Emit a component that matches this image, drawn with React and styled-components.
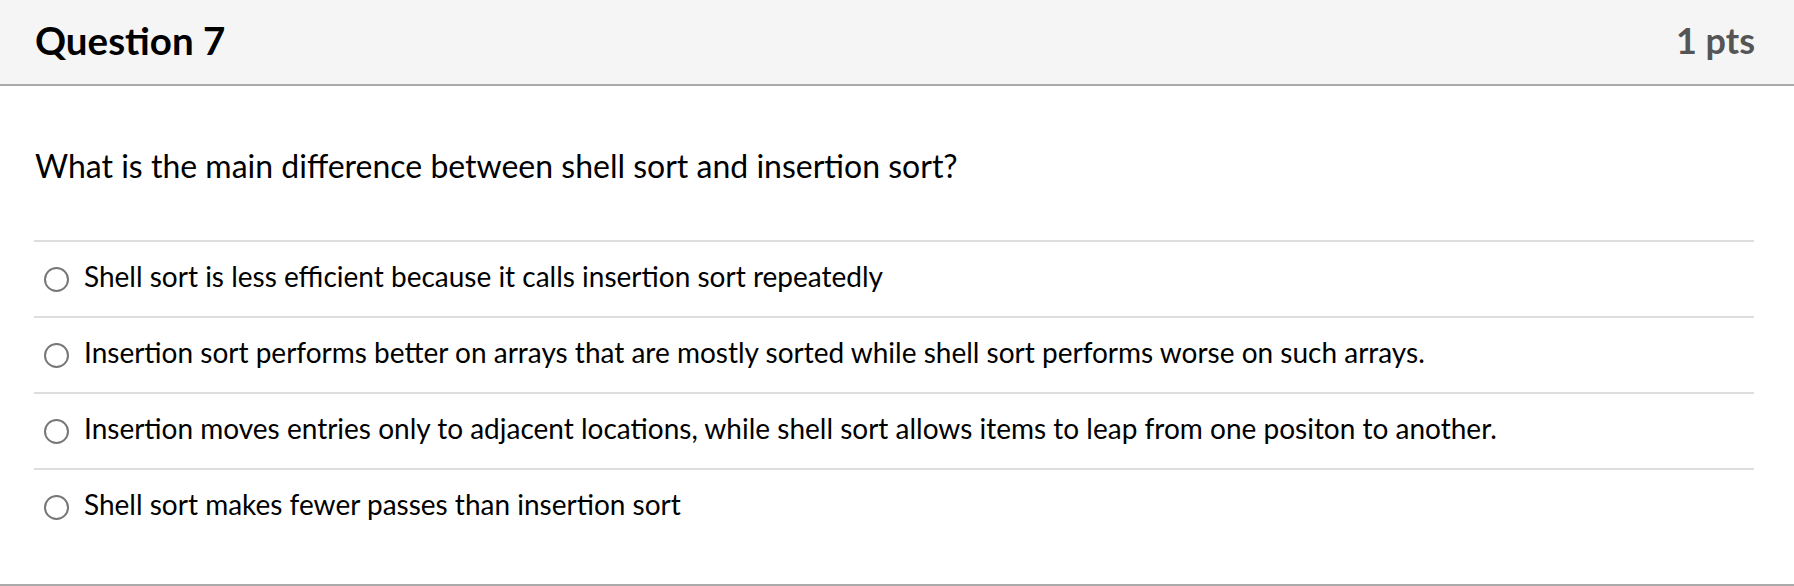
import React from "react";
import styled, { createGlobalStyle } from "styled-components";

const Global = createGlobalStyle`
  html, body { margin: 0; padding: 0; background: #fff; }
  body { font-family: Lato, "Noto Sans", sans-serif; color: #000; }
`;

const Card = styled.section`
  width: 1794px;
  height: 586px;
  box-sizing: border-box;
  border-bottom: 2px solid #aaaaaa;
  display: flex;
  flex-direction: column;
`;

const Header = styled.header`
  height: 84px;
  flex: none;
  box-sizing: content-box;
  background: #f5f5f5;
  border-bottom: 2px solid #aaaaaa;
  display: flex;
  align-items: center;
  justify-content: space-between;
  padding: 0 39px 0 35px;
`;

const Title = styled.h2`
  margin: 0;
  font-family: Lato, sans-serif;
  font-weight: 700;
  font-size: 38.5px;
  line-height: 44px;
  color: #000;
  padding-bottom: 4px;
`;

const Points = styled.div`
  font-family: Lato, sans-serif;
  font-weight: 700;
  font-size: 36px;
  line-height: 44px;
  color: #555555;
  padding-bottom: 4px;
`;

const Body = styled.div`
  padding: 61px 40px 0 34px;
`;

const Prompt = styled.p`
  margin: 0 0 55px 1px;
  font-family: Lato, sans-serif;
  font-size: 32px;
  line-height: 38px;
`;

const Answers = styled.div`
  display: flex;
  flex-direction: column;
`;

const Answer = styled.label`
  display: flex;
  align-items: flex-start;
  height: 74px;
  box-sizing: content-box;
  border-top: 2px solid #dddddd;
`;

const Radio = styled.span`
  flex: none;
  width: 25px;
  height: 25px;
  box-sizing: border-box;
  border: 2px solid #777777;
  border-radius: 50%;
  margin: 25px 15px 0 10px;
`;

const AnswerText = styled.span`
  font-family: Lato, sans-serif;
  font-size: 28px;
  line-height: 34px;
  padding-top: 17px;
  color: #000;
`;

const answers = [
  "Shell sort is less efficient because it calls insertion sort repeatedly",
  "Insertion sort performs better on arrays that are mostly sorted while shell sort performs worse on such arrays.",
  "Insertion moves entries only to adjacent locations, while shell sort allows items to leap from one positon to another.",
  "Shell sort makes fewer passes than insertion sort",
];

export default function App() {
  return (
    <>
      <Global />
      <Card>
        <Header>
          <Title>Question 7</Title>
          <Points>1 pts</Points>
        </Header>
        <Body>
          <Prompt>What is the main difference between shell sort and insertion sort?</Prompt>
          <Answers>
            {answers.map((a) => (
              <Answer key={a}>
                <Radio />
                <AnswerText>{a}</AnswerText>
              </Answer>
            ))}
          </Answers>
        </Body>
      </Card>
    </>
  );
}
